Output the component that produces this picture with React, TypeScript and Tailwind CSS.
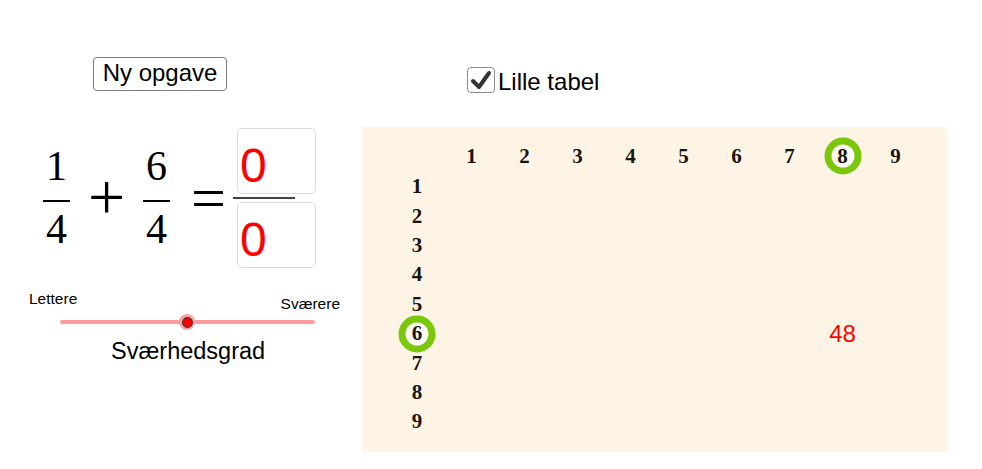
const serif = "font-['Liberation_Serif',serif]";
const sans = "font-['Liberation_Sans',Arial,sans-serif]";

const cols = [1, 2, 3, 4, 5, 6, 7, 8, 9];

function Fraction({ top, bottom }: { top: string; bottom: string }) {
  return (
    <div className={`flex w-[27px] flex-col items-center ${serif} text-[42px] leading-[40px] text-black`}>
      <div className="mt-[18px] h-[40px]">{top}</div>
      <div className="mt-[14px] h-[1.5px] w-full bg-black" />
      <div className="mt-[7px] h-[40px]">{bottom}</div>
    </div>
  );
}

function Ring() {
  return (
    <span className="absolute left-1/2 top-1/2 h-[37px] w-[37px] -translate-x-1/2 -translate-y-1/2 rounded-full border-[7px] border-[#7ac70c] bg-[#fffaf3]" />
  );
}

function AnswerBox() {
  return (
    <div className={`h-[66px] w-[79px] rounded-[5px] border border-[#dcdcdc] bg-white pl-[2px] pt-[13px] ${sans} text-[48px] leading-[48px] text-[#ff0000]`}>
      0
    </div>
  );
}

export default function App() {
  return (
    <div className="flex h-[469px] w-[982px] overflow-hidden bg-white">
      {/* left: task + difficulty */}
      <div className="flex w-[362px] shrink-0 flex-col">
        <button
          className={`ml-[93px] mt-[57px] flex h-[34px] w-[134px] items-center justify-center rounded-[4px] border border-[#7a7a7a] bg-white pb-[3px] ${sans} text-[24px] leading-none text-black`}
        >
          Ny opgave
        </button>

        <div className="mt-[37px] flex h-[139px] items-start">
          <div className="ml-[43px]">
            <Fraction top="1" bottom="4" />
          </div>
          <span className={`ml-[18px] mt-[36px] w-[37px] ${serif} text-[66px] font-light leading-[66px]`}>+</span>
          <div className="ml-[18px]">
            <Fraction top="6" bottom="4" />
          </div>
          <span className={`ml-[21px] mt-[37px] w-[37px] ${serif} text-[62px] leading-[66px]`}>=</span>
          <div className="relative ml-[5px] flex w-[83px] flex-col items-end gap-[8px]">
            <AnswerBox />
            <div className="h-[65px]">
              <AnswerBox />
            </div>
            <div className="absolute left-0 top-[69px] h-[2px] w-[62px] bg-[#444]" />
          </div>
        </div>

        <div className={`mt-[24px] flex items-start justify-between pl-[29px] pr-[22px] ${sans} text-[15.5px] leading-none text-black`}>
          <span>Lettere</span>
          <span className="mt-[5px]">Sværere</span>
        </div>

        <div className="relative ml-[60px] mt-[2.5px] flex h-[16px] w-[255px] items-center">
          <div className="h-[4px] w-full rounded-full bg-[#ff9a9a]" />
          <span className="absolute left-[119px] top-1/2 flex h-[16px] w-[16px] -translate-y-1/2 items-center justify-center rounded-full bg-[#f6a3a3]">
            <span className="h-[11px] w-[11px] rounded-full border border-[#333] bg-[#ff0000]" />
          </span>
        </div>

        <div className={`ml-[111px] mt-[10px] ${sans} text-[23.5px] leading-none text-black`}>Sværhedsgrad</div>
      </div>

      {/* right: multiplication table */}
      <div className="flex flex-col">
        <label className="ml-[105px] mt-[67px] flex h-[26px] items-center">
          <span className="flex h-[26px] w-[28px] items-center justify-center rounded-[4px] border border-[#8a8a8a] bg-white">
            <svg width="22" height="20" viewBox="0 0 22 20">
              <path d="M3 11 L9 17 L19 3" fill="none" stroke="#333" strokeWidth="4" strokeLinecap="round" strokeLinejoin="round" />
            </svg>
          </span>
          <span className={`ml-[3px] mt-[3px] ${sans} text-[24px] leading-none text-black`}>Lille tabel</span>
        </label>

        <div className="mt-[34px] h-[325px] w-[585px] bg-[#fdf4e6] pl-[27px] pt-[13px]">
          <div className={`grid grid-cols-[56px_repeat(9,53px)] grid-rows-[32px_repeat(9,29.4px)] ${serif} text-[21px] font-bold leading-none text-[#1a140c]`}>
            <div />
            {cols.map((c) => (
              <div key={`h${c}`} className="relative flex items-center justify-center">
                {c === 8 ? <Ring /> : null}
                <span className="relative">{c}</span>
              </div>
            ))}
            {cols.map((r) => (
              <>
                <div key={`r${r}`} className="relative flex items-center justify-center">
                  {r === 6 ? <Ring /> : null}
                  <span className="relative">{r}</span>
                </div>
                {cols.map((c) => (
                  <div key={`c${r}-${c}`} className="flex items-center justify-center">
                    {r === 6 && c === 8 ? (
                      <span className={`${sans} text-[24px] font-normal text-[#ff0000]`}>48</span>
                    ) : null}
                  </div>
                ))}
              </>
            ))}
          </div>
        </div>
      </div>
    </div>
  );
}
